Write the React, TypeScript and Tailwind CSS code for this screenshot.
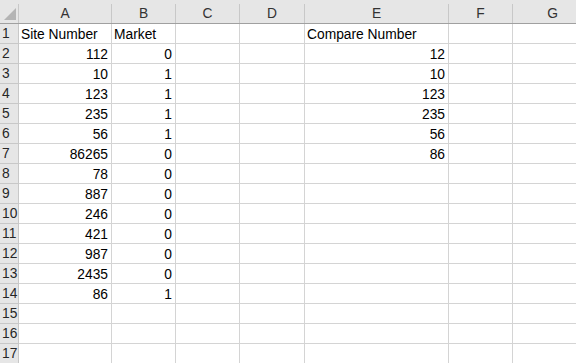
import React from "react";

const cols = [
  { k: "A", w: 93 },
  { k: "B", w: 64 },
  { k: "C", w: 64 },
  { k: "D", w: 65 },
  { k: "E", w: 144 },
  { k: "F", w: 64 },
  { k: "G", w: 80 },
];

const aVals = ["112", "10", "123", "235", "56", "86265", "78", "887", "246", "421", "987", "2435", "86"];
const bVals = ["0", "1", "1", "1", "1", "0", "0", "0", "0", "0", "0", "0", "1"];
const eVals = ["12", "10", "123", "235", "56", "86"];

function cellContent(row: number, col: string): { t: string; right: boolean } {
  if (row === 1) {
    if (col === "A") return { t: "Site Number", right: false };
    if (col === "B") return { t: "Market", right: false };
    if (col === "E") return { t: "Compare Number", right: false };
    return { t: "", right: false };
  }
  const i = row - 2;
  if (col === "A" && aVals[i]) return { t: aVals[i], right: true };
  if (col === "B" && bVals[i]) return { t: bVals[i], right: true };
  if (col === "E" && eVals[i]) return { t: eVals[i], right: true };
  return { t: "", right: false };
}

export default function App() {
  const rows = Array.from({ length: 17 }, (_, i) => i + 1);
  return (
    <div
      className="w-[576px] h-[363px] overflow-hidden bg-white text-[13.8px] text-black"
      style={{ fontFamily: '"Liberation Sans", Arial, sans-serif' }}
    >
      <div className="flex h-[24px] bg-[#e6e6e6] border-b border-[#a0a0a0]">
        <div className="relative w-[19px] shrink-0 border-r border-[#c8c8c8] mt-[4px]">
          <svg className="absolute left-[4px] top-[4px]" width="13" height="13" viewBox="0 0 13 13">
            <polygon points="12,0 12,12 0,12" fill="#b4b4b4" />
          </svg>
        </div>
        {cols.map((c) => (
          <div
            key={c.k}
            className="shrink-0 flex justify-center items-start border-r border-[#c8c8c8] mt-[4px] text-[#333] leading-[19px]"
            style={{ width: c.w }}
          >
            {c.k}
          </div>
        ))}
      </div>
      {rows.map((r) => (
        <div key={r} className="flex h-[20px]">
          <div className="w-[19px] shrink-0 bg-[#e6e6e6] border-r border-b border-[#c8c8c8] pl-[2px] leading-[20px] text-[#262626]">
            {r}
          </div>
          {cols.map((c) => {
            const { t, right } = cellContent(r, c.k);
            return (
              <div
                key={c.k}
                className={`shrink-0 border-r border-b border-[#d4d4d4] leading-[20px] pt-[1px] whitespace-nowrap overflow-visible ${right ? "text-right pr-[3px]" : "pl-[2px]"}`}
                style={{ width: c.w }}
              >
                {t}
              </div>
            );
          })}
        </div>
      ))}
    </div>
  );
}
